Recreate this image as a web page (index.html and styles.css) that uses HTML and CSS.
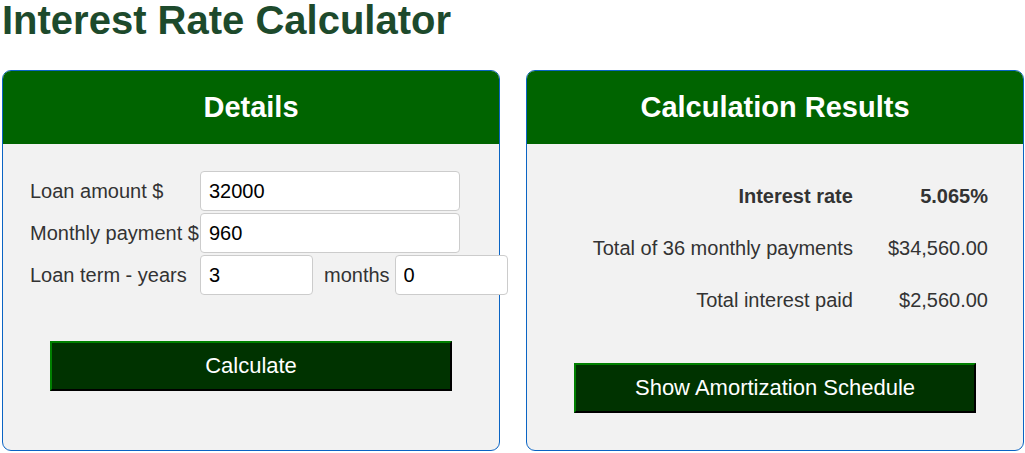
FILE: index.html
```html
<!DOCTYPE html>
<html lang="en">
<head>
<meta charset="UTF-8">
<meta name="viewport" content="width=device-width, initial-scale=1.0">
<title>Interest Rate Calculator</title>
<link rel="stylesheet" href="styles.css">
</head>
<body>

<h1>Interest Rate Calculator</h1>

<div class="panels">
  <div class="panel">
    <div class="panel-head">Details</div>
    <div class="panel-body details">
      <div class="row">
        <label class="lbl" for="amount">Loan amount $</label>
        <input class="field wide" id="amount" type="text" value="32000">
      </div>
      <div class="row">
        <label class="lbl" for="payment">Monthly payment $</label>
        <input class="field wide" id="payment" type="text" value="960">
      </div>
      <div class="row">
        <label class="lbl" for="years">Loan term - years</label>
        <input class="field short" id="years" type="text" value="3">
        <label class="months" for="months">months</label>
        <input class="field short" id="months" type="text" value="0">
      </div>
      <button class="btn calc">Calculate</button>
    </div>
  </div>

  <div class="panel">
    <div class="panel-head">Calculation Results</div>
    <div class="panel-body results">
      <div class="grid">
        <div class="key bold">Interest rate</div>
        <div class="val bold">5.065%</div>
        <div class="key">Total of 36 monthly payments</div>
        <div class="val">$34,560.00</div>
        <div class="key">Total interest paid</div>
        <div class="val">$2,560.00</div>
      </div>
      <button class="btn sched">Show Amortization Schedule</button>
    </div>
  </div>
</div>

</body>
</html>
```

FILE: styles.css
```css
body {
  margin: 0;
  padding: 0 1px 0 2px;
  font-family: "Liberation Sans", Arial, sans-serif;
  color: #333;
  background: #fff;
}
h1 {
  margin: 0;
  height: 70px;
  font-size: 40px;
  line-height: 40px;
  color: #1d4a2c;
}
.panels {
  display: flex;
  gap: 26px;
}
.panel {
  box-sizing: border-box;
  width: 498px;
  flex: none;
  height: 381px;
  border: 1px solid #0a64c4;
  border-radius: 9px;
  background: #f2f2f2;
  display: flex;
  flex-direction: column;
}
.panel-head {
  height: 73px;
  background: #006400;
  color: #fff;
  font-weight: bold;
  font-size: 29px;
  display: flex;
  align-items: center;
  justify-content: center;
  border-radius: 8px 8px 0 0;
}
.panel-body {
  flex: 1;
  display: flex;
  flex-direction: column;
}
.details {
  padding: 27px 0 0 27px;
}
.row {
  display: flex;
  align-items: center;
  height: 40px;
  margin-bottom: 2px;
  font-size: 20px;
}
.lbl {
  width: 170px;
  flex: none;
}
.field {
  box-sizing: border-box;
  height: 40px;
  border: 1px solid #ccc;
  border-radius: 4px;
  background: #fff;
  font-family: "Liberation Sans", Arial, sans-serif;
  font-size: 20px;
  color: #000;
  padding: 0 8px;
  flex: none;
}
.wide {
  width: 260px;
}
.short {
  width: 113px;
}
.months {
  margin: 0 5px 0 11px;
}
.btn {
  box-sizing: border-box;
  width: 402px;
  height: 50px;
  background: #003300;
  color: #fff;
  font-family: "Liberation Sans", Arial, sans-serif;
  font-size: 22px;
  border: 2px solid;
  border-color: #008000 #000 #000 #008000;
  cursor: pointer;
}
.calc {
  margin: 44px 0 0 20px;
}
.results {
  padding-top: 26px;
  align-items: center;
}
.grid {
  align-self: flex-end;
  margin-right: 35px;
  display: grid;
  grid-template-columns: auto auto;
  column-gap: 35px;
  font-size: 20px;
}
.key, .val {
  height: 52px;
  display: flex;
  align-items: center;
  justify-content: flex-end;
}
.bold {
  font-weight: bold;
}
.sched {
  margin-top: 37px;
}
```
